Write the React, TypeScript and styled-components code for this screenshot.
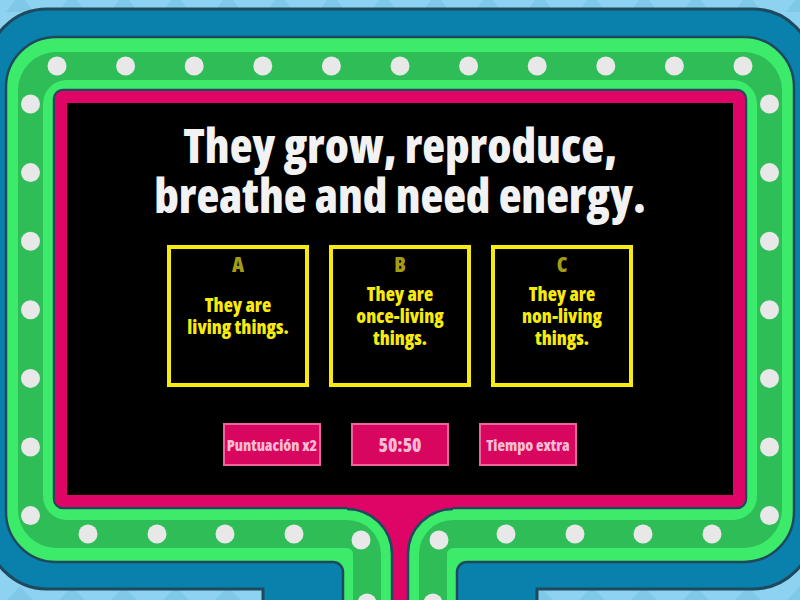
import { createGlobalStyle, styled } from 'styled-components';

const GlobalStyle = createGlobalStyle`
  body {
    margin: 0;
    background: #8dd2f0;
  }
`;

const FONT = `"Open Sans", "DejaVu Sans Condensed", sans-serif`;

const COLORS = {
  sky: '#8dd2f0',
  skyShade: '#80c8e8',
  outline: '#1f4a5e',
  blue: '#0a80ad',
  green: '#3deb6a',
  greenDark: '#2fbd58',
  bulb: '#e8e8e8',
  magenta: '#df0567',
  yellow: '#f7eb0d',
};

const answers = [
  { letter: 'A', text: 'They are\nliving things.' },
  { letter: 'B', text: 'They are\nonce-living\nthings.' },
  { letter: 'C', text: 'They are\nnon-living\nthings.' },
];

const powerUps = [
  { label: 'Puntuación x2', big: false },
  { label: '50:50', big: true },
  { label: 'Tiempo extra', big: false },
];

// bulbs around the frame
const bulbs: [number, number][] = [
  ...Array.from({ length: 11 }, (_, k): [number, number] => [57 + 68.6 * k, 66]),
  ...Array.from({ length: 7 }, (_, k): [number, number] => [30.5, 104 + 68.6 * k]),
  ...Array.from({ length: 7 }, (_, k): [number, number] => [769.5, 104 + 68.6 * k]),
  [88, 534],
  [157, 534],
  [225, 534],
  [294, 534],
  [361, 540],
  [367, 603],
  [506, 534],
  [575, 534],
  [643, 534],
  [712, 534],
  [439, 540],
  [433, 603],
];

const beams = Array.from({ length: 16 }, (_, k) => 20 + k * 52);

const FrameArt = () => (
  <S.Art viewBox="0 0 800 600" width="800" height="600">
    {beams.map((x) => (
      <polygon key={`t${x}`} points={`${x - 14},12 ${x},-6 ${x + 14},12`} fill={COLORS.skyShade} />
    ))}
    {beams.map((x) => (
      <polygon key={`b${x}`} points={`${x - 16},604 ${x},586 ${x + 16},604`} fill={COLORS.skyShade} />
    ))}

    <path
      d="M 47 9 H 753 A 60 60 0 0 1 813 69 V 529 A 60 60 0 0 1 753 589 H 537 V 612 H 263 V 589 H 47 A 60 60 0 0 1 -13 529 V 69 A 60 60 0 0 1 47 9 Z"
      fill={COLORS.blue}
      stroke={COLORS.outline}
      strokeWidth="3"
    />
    <path
      d="M 56 37 H 744 A 50 50 0 0 1 794 87 V 512 A 50 50 0 0 1 744 562 H 467 A 10 10 0 0 0 457 572 V 612 H 343 V 572 A 10 10 0 0 0 333 562 H 56 A 50 50 0 0 1 6 512 V 87 A 50 50 0 0 1 56 37 Z"
      fill={COLORS.green}
      stroke={COLORS.outline}
      strokeWidth="2.5"
    />
    <path
      d="M 56 52 H 744 A 38 38 0 0 1 782 90 V 510 A 38 38 0 0 1 744 548 H 453 A 6 6 0 0 0 447 554 V 612 H 419 V 554 A 34 34 0 0 1 453 520 H 347 A 34 34 0 0 1 381 554 V 612 H 353 V 554 A 6 6 0 0 0 347 548 H 56 A 38 38 0 0 1 18 510 V 90 A 38 38 0 0 1 56 52 Z"
      fill={COLORS.greenDark}
    />
    <rect x="43" y="80" width="714" height="440" rx="24" fill={COLORS.green} />
    <rect
      x="54"
      y="90"
      width="692"
      height="418"
      rx="9"
      fill={COLORS.magenta}
      stroke={COLORS.outline}
      strokeWidth="2.5"
    />
    <path
      d="M 347 505 H 453 V 509 A 45 45 0 0 0 408 554 V 612 H 392 V 554 A 45 45 0 0 0 347 509 Z"
      fill={COLORS.magenta}
    />
    <path
      d="M 453 509 A 45 45 0 0 0 408 554 V 612 M 392 612 V 554 A 45 45 0 0 0 347 509"
      fill="none"
      stroke={COLORS.outline}
      strokeWidth="2.5"
    />
    {bulbs.map(([cx, cy]) => (
      <circle key={`${cx}-${cy}`} cx={cx} cy={cy} r="9.5" fill={COLORS.bulb} />
    ))}
  </S.Art>
);

const App = () => (
  <>
    <GlobalStyle />
    <S.Stage>
      <FrameArt />
      <S.Board>
        <S.Question>
          They grow, reproduce,
          <br />
          breathe and need energy.
        </S.Question>

        <S.Answers>
          {answers.map(({ letter, text }) => (
            <S.Answer key={letter}>
              <S.Letter>{letter}</S.Letter>
              <S.AnswerText>{text}</S.AnswerText>
            </S.Answer>
          ))}
        </S.Answers>

        <S.PowerUps>
          {powerUps.map(({ label, big }) => (
            <S.PowerUp key={label} type="button" $big={big}>
              {label}
            </S.PowerUp>
          ))}
        </S.PowerUps>
      </S.Board>
    </S.Stage>
  </>
);

const S = {
  Stage: styled.div`
    position: relative;
    width: 800px;
    height: 600px;
    overflow: hidden;
    background: ${COLORS.sky};
    font-family: ${FONT};
    font-stretch: 75%;
  `,

  Art: styled.svg`
    position: absolute;
    inset: 0;
    display: block;
  `,

  Board: styled.main`
    position: relative;
    box-sizing: border-box;
    display: flex;
    flex-direction: column;
    align-items: center;
    width: 690px;
    height: 416px;
    margin: 91px 0 0 55px;
    padding-top: 17px;
    border: 12px solid ${COLORS.magenta};
    border-radius: 8px;
    background: #000;
  `,

  Question: styled.h1`
    margin: 0;
    font-size: 47px;
    font-weight: 800;
    line-height: 50px;
    text-align: center;
    color: #f2f2f2;
  `,

  Answers: styled.div`
    display: flex;
    gap: 20px;
    margin-top: 25px;
  `,

  Answer: styled.div`
    position: relative;
    box-sizing: border-box;
    display: flex;
    align-items: center;
    justify-content: center;
    width: 142px;
    height: 142px;
    border: 4px solid ${COLORS.yellow};
  `,

  Letter: styled.span`
    position: absolute;
    top: 5px;
    left: 0;
    right: 0;
    font-size: 21px;
    font-weight: 800;
    line-height: 21px;
    text-align: center;
    color: #a39c14;
  `,

  AnswerText: styled.p`
    margin: 0;
    font-size: 19px;
    font-weight: 800;
    line-height: 22px;
    text-align: center;
    white-space: pre-line;
    color: ${COLORS.yellow};
  `,

  PowerUps: styled.div`
    display: flex;
    gap: 30px;
    margin-top: 36px;
  `,

  PowerUp: styled.button<{ $big: boolean }>`
    box-sizing: border-box;
    width: 98px;
    height: 43px;
    padding: 0;
    border: 2px solid #f0649e;
    background: #d9065f;
    font-family: ${FONT};
    font-stretch: 75%;
    font-size: ${({ $big }) => ($big ? '19px' : '15.5px')};
    font-weight: 800;
    color: #f7bcd4;
    cursor: pointer;
  `,
};

export default App;
